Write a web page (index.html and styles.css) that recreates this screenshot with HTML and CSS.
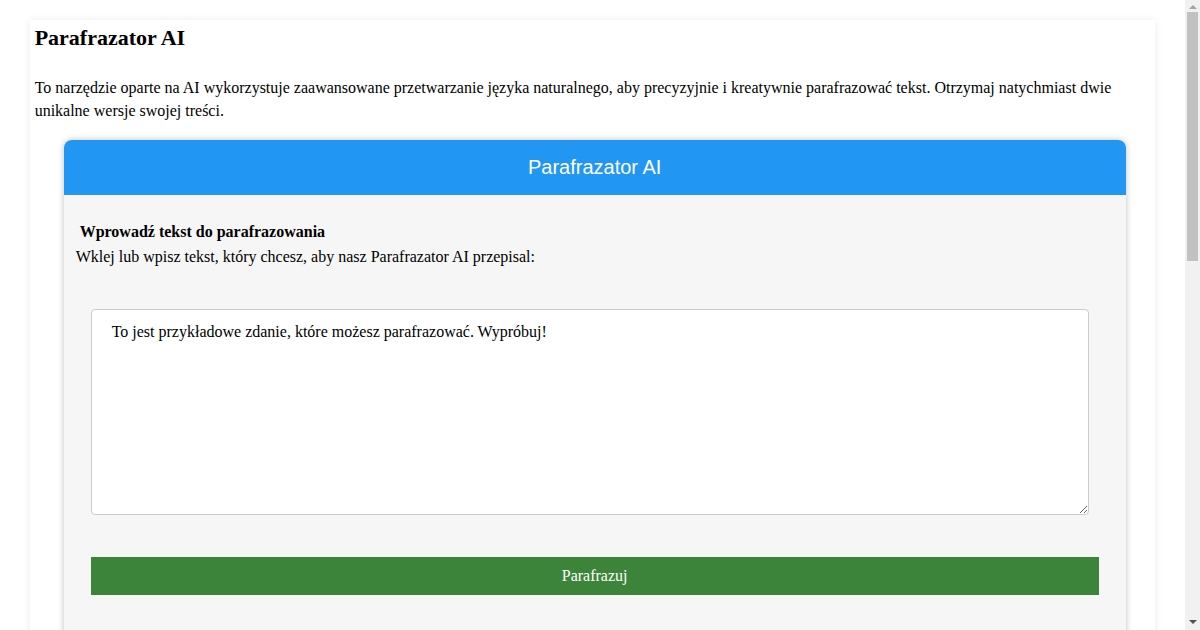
FILE: index.html
```html
<!DOCTYPE html>
<html lang="pl">
  <head>
    <meta charset="UTF-8" />
    <meta name="viewport" content="width=device-width, initial-scale=1.0" />
    <title>Parafrazator AI</title>
    <link rel="stylesheet" href="styles.css">
  </head>
  <body>
    <div class="container">
      <h1>Parafrazator AI</h1>
      <p class="intro">To narzędzie oparte na AI wykorzystuje zaawansowane przetwarzanie języka naturalnego, aby precyzyjnie i kreatywnie parafrazować tekst. Otrzymaj natychmiast dwie unikalne wersje swojej treści.</p>

      <!-- karta narzędzia -->
      <div class="tool-card">
        <div class="tool-header">Parafrazator AI</div>
        <div class="tool-body">
          <label class="input-label" for="source">Wprowadź tekst do parafrazowania</label>
          <p class="input-hint">Wklej lub wpisz tekst, który chcesz, aby nasz Parafrazator AI przepisal:</p>
          <textarea id="source" class="source-text">To jest przykładowe zdanie, które możesz parafrazować. Wypróbuj!</textarea>
          <button class="submit-btn" type="button">Parafrazuj</button>
          <div class="results">
            <div class="result-box"></div>
            <div class="result-box"></div>
          </div>
        </div>
      </div>
    </div>

    <!-- pasek przewijania -->
    <div class="scrollbar">
      <span class="arrow arrow-up"></span>
      <span class="thumb"></span>
      <span class="arrow arrow-down"></span>
    </div>
  </body>
</html>
```

FILE: styles.css
```css
* {
  box-sizing: border-box;
}

body {
  margin: 0 15px 0 0;
  background: #fff;
  font-family: "Liberation Serif", "Times New Roman", serif;
  color: #000;
}

.container {
  width: 95%;
  margin: 20px auto;
  padding: 5px;
  background: #fff;
  box-shadow: 0 0 8px rgba(0, 0, 0, 0.08);
}

h1 {
  margin: 0;
  font-size: 22px;
  line-height: 26px;
}

.intro {
  margin: 25px 0 18px;
  font-size: 16px;
  line-height: 23px;
}

/* karta */
.tool-card {
  width: 1062px;
  margin-left: 29px;
  border-radius: 8px;
  overflow: hidden;
  background: #f6f6f6;
  box-shadow: 0 0 6px rgba(0, 0, 0, 0.25);
}

.tool-header {
  height: 55px;
  display: flex;
  align-items: center;
  justify-content: center;
  background: #2196f3;
  color: #fff;
  font-family: "Liberation Sans", Arial, sans-serif;
  font-size: 20px;
}

.tool-body {
  padding: 27px 27px 40px;
}

.input-label {
  display: block;
  margin-left: -11px;
  font-weight: bold;
  font-size: 16px;
  line-height: 20px;
}

.input-hint {
  margin: 5px 0 42px -15px;
  font-size: 16px;
  line-height: 20px;
}

.source-text {
  display: block;
  width: 998px;
  height: 206px;
  padding: 12px 20px;
  border: 1px solid #ccc;
  border-radius: 4px;
  background: #fff;
  font-family: "Liberation Serif", "Times New Roman", serif;
  font-size: 16px;
  line-height: 20px;
  color: #000;
}

.submit-btn {
  display: block;
  width: 1008px;
  height: 38px;
  margin-top: 42px;
  border: none;
  background: #3c8439;
  color: #fff;
  font-family: "Liberation Serif", "Times New Roman", serif;
  font-size: 16px;
  cursor: pointer;
}

.results {
  display: flex;
  flex-direction: column;
  gap: 20px;
  margin-top: 40px;
}

.result-box {
  height: 150px;
  border: 1px solid #ccc;
  border-radius: 4px;
  background: #fff;
}

/* pasek przewijania */
.scrollbar {
  position: fixed;
  top: 0;
  right: 0;
  width: 15px;
  height: 100vh;
  display: flex;
  flex-direction: column;
  align-items: center;
  background: #f1f1f1;
}

.thumb {
  width: 11px;
  height: 249px;
  margin-top: 3px;
  background: #c1c1c1;
}

.arrow {
  width: 0;
  height: 0;
  border-left: 4px solid transparent;
  border-right: 4px solid transparent;
}

.arrow-up {
  margin-top: 5px;
  border-bottom: 4px solid #a3a3a3;
}

.arrow-down {
  margin-top: auto;
  margin-bottom: 6px;
  border-top: 4px solid #505050;
}
```
